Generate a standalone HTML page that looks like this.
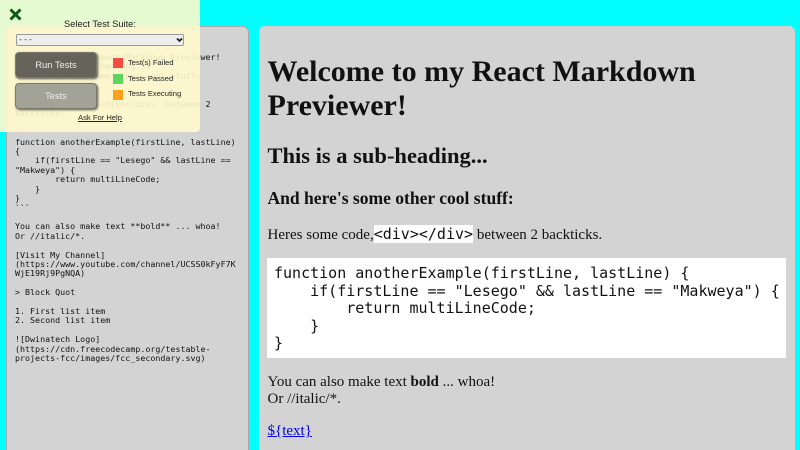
<!DOCTYPE html>
<html><head><meta charset="utf-8"><style>
html,body{margin:0;padding:0;width:800px;height:450px;overflow:hidden;background:#0ff}
body{position:relative;font-family:"Liberation Serif",serif;color:#111}
.abs{position:absolute;white-space:pre;margin:0}
#ed{position:absolute;left:6px;top:26px;width:241px;height:440px;background:#d3d3d3;border:1px solid #aaa;border-radius:6px;box-sizing:content-box}
#edt{position:absolute;left:15px;top:53px;font:8.33px/9.4px "DejaVu Sans Mono",monospace;white-space:pre;margin:0;color:#111}
#pv{position:absolute;left:259px;top:26px;width:536px;height:440px;background:#d3d3d3;border-radius:6px}
.mono{font-family:"DejaVu Sans Mono",monospace}
#code{position:absolute;left:267px;top:258px;width:519px;height:100px;background:#fff}
#fcc{position:absolute;left:0;top:0;width:200px;height:132px;background:rgba(255,250,205,.9);border-radius:0 0 4px 0;font-family:"Liberation Sans",sans-serif}
.btn{position:absolute;left:15px;width:80px;height:24px;border-radius:4px;color:#eee;font-size:9.33px;line-height:24px;text-align:center;box-shadow:1px 1px 2px #555;border:1px solid #7a7a6a}
.sq{position:absolute;left:113px;width:10px;height:10px}
.lg{position:absolute;left:128px;font-size:7.6px;color:#222;white-space:pre}
</style></head><body>
<div id="ed"></div>
<pre id="edt"># Welcome to my React Markdown Previewer!
## This is a sub-heading...
### And here's some other cool stuff:


Heres some code,&#96;&lt;div&gt;&lt;/div&gt;&#96; between 2
backticks.

&#96;&#96;&#96;
function anotherExample(firstLine, lastLine)
{
    if(firstLine == "Lesego" &amp;&amp; lastLine ==
"Makweya") {
        return multiLineCode;
    }
}
&#96;&#96;&#96;

You can also make text **bold** ... whoa!
Or //italic/*.

[Visit My Channel]
(https://www.youtube.com/channel/UCSS0kFyF7K
WjE19Rj9PgNQA)

&gt; Block Quot

1. First list item
2. Second list item

![Dwinatech Logo]
(https://cdn.freecodecamp.org/testable-
projects-fcc/images/fcc_secondary.svg)</pre>
<div id="pv"></div>
<div class="abs" style="left:267.5px;top:54.5px;font-size:30px;line-height:34.5px;font-weight:bold">Welcome to my React Markdown
Previewer!</div>
<div class="abs" style="left:267.5px;top:141px;font-size:22.5px;line-height:30px;font-weight:bold">This is a sub-heading...</div>
<div class="abs" style="left:267.5px;top:186px;font-size:17.55px;line-height:24px;font-weight:bold">And here's some other cool stuff:</div>
<div class="abs" style="left:267.5px;top:224px;font-size:15px;line-height:20px">Heres some code,<span class="mono" style="background:#fff;padding:0">&lt;div&gt;&lt;/div&gt;</span> between 2 backticks.</div>
<div id="code"></div>
<div class="abs mono" style="left:274px;top:265px;font-size:15px;line-height:17.5px;color:#111">function anotherExample(firstLine, lastLine) {
    if(firstLine == "Lesego" &amp;&amp; lastLine == "Makweya") {
        return multiLineCode;
    }
}</div>
<div class="abs" style="left:267.5px;top:374px;font-size:15px;line-height:17.25px">You can also make text <b>bold</b> ... whoa!
Or //italic/*.</div>
<div class="abs" style="left:267.5px;top:421px;font-size:15px;line-height:20px;color:#00e;text-decoration:underline">${text}</div>

<div id="fcc">
<svg style="position:absolute;left:7.5px;top:7px" width="15" height="15" viewBox="0 0 15 15"><path d="M2.5 2.5L12.5 12.5M12.5 2.5L2.5 12.5" stroke="#0a5a14" stroke-width="3" fill="none"/></svg>
<div class="abs" style="left:0;width:200px;text-align:center;top:18px;font-size:9.33px;line-height:13px;color:#222">Select Test Suite:</div>
<div style="position:absolute;left:16px;top:34px;width:166px;height:10px;background:#efefef;border:1px solid #999;border-radius:2px;font-size:8px;line-height:10px;color:#222;box-sizing:content-box">&nbsp;- - -</div>
<svg style="position:absolute;left:176px;top:37px" width="7" height="6" viewBox="0 0 7 6"><path d="M1 1.5L3.5 4L6 1.5" stroke="#111" stroke-width="1.6" fill="none"/></svg>
<div class="btn" style="top:52px;background:#66645a">Run Tests</div>
<div class="btn" style="top:83px;background:#a3a297">Tests</div>
<div class="sq" style="top:58px;background:#f44c42"></div>
<div class="sq" style="top:74px;background:#5cd65c"></div>
<div class="sq" style="top:90px;background:#ffa01e"></div>
<div class="lg" style="top:57.5px">Test(s) Failed</div>
<div class="lg" style="top:73.5px">Tests Passed</div>
<div class="lg" style="top:89px">Tests Executing</div>
<div class="abs" style="left:0;width:200px;text-align:center;top:112px;font-size:7.6px;line-height:12px;color:#222;text-decoration:underline">Ask For Help</div>
</div>
</body></html>
